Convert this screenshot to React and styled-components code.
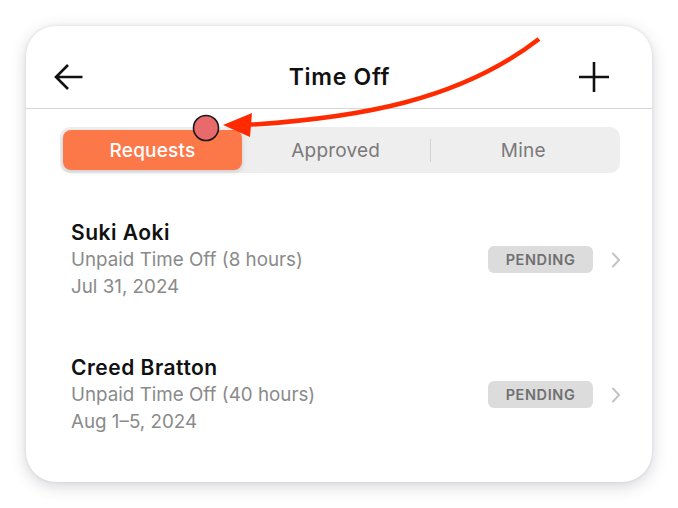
import React, { useState } from 'react';
import styled, { createGlobalStyle } from 'styled-components';

const GlobalStyle = createGlobalStyle`
  html, body {
    margin: 0;
    padding: 0;
    background: #ffffff;
  }
  body {
    font-family: Inter, "Open Sans", sans-serif;
    -webkit-font-smoothing: antialiased;
  }
`;

const Page = styled.div`
  position: relative;
  width: 678px;
  height: 508px;
  padding: 26px 26px 0 26px;
  box-sizing: border-box;
`;

const Card = styled.div`
  width: 626px;
  height: 456px;
  background: #fff;
  border-radius: 30px;
  box-shadow: 0 4px 16px rgba(60, 60, 80, 0.22), 0 0 3px rgba(60, 60, 80, 0.12);
  overflow: hidden;
  display: flex;
  flex-direction: column;
`;

const Header = styled.div`
  height: 83px;
  box-sizing: border-box;
  padding: 30px 37px 11px 22px;
  display: grid;
  grid-template-columns: 1fr auto 1fr;
  align-items: center;
  border-bottom: 1px solid #d6d6d9;
`;

const IconButton = styled.div`
  width: 42px;
  height: 42px;
  display: flex;
  align-items: center;
  justify-content: center;
  justify-self: ${p => (p.$end ? 'end' : 'start')};
`;

const Title = styled.div`
  font-size: 23px;
  font-weight: 600;
  letter-spacing: 0.7px;
  color: #111;
  margin-left: 16px;
`;

const Segmented = styled.div`
  margin: 18px 32px 0 34px;
  height: 46px;
  box-sizing: border-box;
  padding: 3px;
  background: #eeeeee;
  border-radius: 10px;
  display: grid;
  grid-template-columns: 179px 1fr 1fr;
  align-items: center;
`;

const Tab = styled.div`
  position: relative;
  height: 40px;
  display: flex;
  align-items: center;
  justify-content: center;
  font-size: 19px;
  letter-spacing: 0.2px;
  border-radius: 8px;
  color: ${p => (p.$active ? '#fff' : '#7a7a7a')};
  background: ${p => (p.$active ? '#fd7849' : 'transparent')};
  box-shadow: ${p => (p.$active ? '0 2px 5px rgba(0,0,0,0.14)' : 'none')};
  font-weight: ${p => (p.$active ? 500 : 400)};

  ${p =>
    p.$divider &&
    `
    &::before {
      content: '';
      position: absolute;
      left: 0;
      top: 9px;
      bottom: 8px;
      width: 1px;
      background: #d2d2d2;
    }
  `}
`;

const List = styled.div`
  padding-top: 19px;
  display: flex;
  flex-direction: column;
`;

const Row = styled.div`
  height: 135px;
  box-sizing: border-box;
  padding: 0 31px 0 45px;
  display: flex;
  align-items: center;
`;

const Info = styled.div`
  flex: 1;
  display: flex;
  flex-direction: column;
`;

const Name = styled.div`
  font-size: 21px;
  font-weight: 600;
  letter-spacing: 0.5px;
  color: #111;
  line-height: 27px;
`;

const Sub = styled.div`
  font-size: 18.8px;
  color: #8a8a8a;
  line-height: 27px;
`;

const Badge = styled.div`
  width: 105px;
  height: 27px;
  border-radius: 6px;
  background: #dcdcdc;
  color: #707070;
  font-size: 14.5px;
  font-weight: 600;
  letter-spacing: 0.6px;
  display: flex;
  align-items: center;
  justify-content: center;
  margin-right: 18px;
`;

const Overlay = styled.svg`
  position: absolute;
  left: 0;
  top: 0;
  pointer-events: none;
`;

const BackIcon = () => (
  <svg width="30" height="28" viewBox="0 0 30 28" fill="none">
    <path d="M28.5 14H2.5M14 2L2 14l12 12" stroke="#111" strokeWidth="2.6" strokeLinecap="butt" strokeLinejoin="miter" />
  </svg>
);

const PlusIcon = () => (
  <svg width="32" height="32" viewBox="0 0 32 32" fill="none">
    <path d="M16 1v30M1 16h30" stroke="#111" strokeWidth="2.6" />
  </svg>
);

const Chevron = () => (
  <svg width="10" height="16" viewBox="0 0 10 16" fill="none">
    <path d="M2 1.5L8 8l-6 6.5" stroke="#c4c4c4" strokeWidth="2" strokeLinecap="round" strokeLinejoin="round" />
  </svg>
);

const requests = [
  { id: 1, name: 'Suki Aoki', type: 'Unpaid Time Off (8 hours)', date: 'Jul 31, 2024' },
  { id: 2, name: 'Creed Bratton', type: 'Unpaid Time Off (40 hours)', date: 'Aug 1–5, 2024' },
];

const tabs = ['Requests', 'Approved', 'Mine'];

export default function App() {
  const [active, setActive] = useState(0);

  return (
    <Page>
      <GlobalStyle />
      <Card>
        <Header>
          <IconButton><BackIcon /></IconButton>
          <Title>Time Off</Title>
          <IconButton $end><PlusIcon /></IconButton>
        </Header>

        <Segmented>
          {tabs.map((t, i) => (
            <Tab
              key={t}
              $active={i === active}
              $divider={i === 2 && active !== 1 && active !== 2}
              onClick={() => setActive(i)}
            >
              {t}
            </Tab>
          ))}
        </Segmented>

        <List>
          {requests.map(r => (
            <Row key={r.id}>
              <Info>
                <Name>{r.name}</Name>
                <Sub>{r.type}</Sub>
                <Sub>{r.date}</Sub>
              </Info>
              <Badge>PENDING</Badge>
              <Chevron />
            </Row>
          ))}
        </List>
      </Card>

      <Overlay width="678" height="508" viewBox="0 0 678 508">
        <path d="M539 39 C 460 100, 360 118, 246 125" stroke="#ff2a00" strokeWidth="4.5" fill="none" />
        <path d="M223 125 L252 113 L250 137 Z" fill="#ff2a00" />
        <circle cx="206" cy="128" r="12.5" fill="#e86a6a" stroke="#1a1a1a" strokeWidth="1.6" />
      </Overlay>
    </Page>
  );
}
